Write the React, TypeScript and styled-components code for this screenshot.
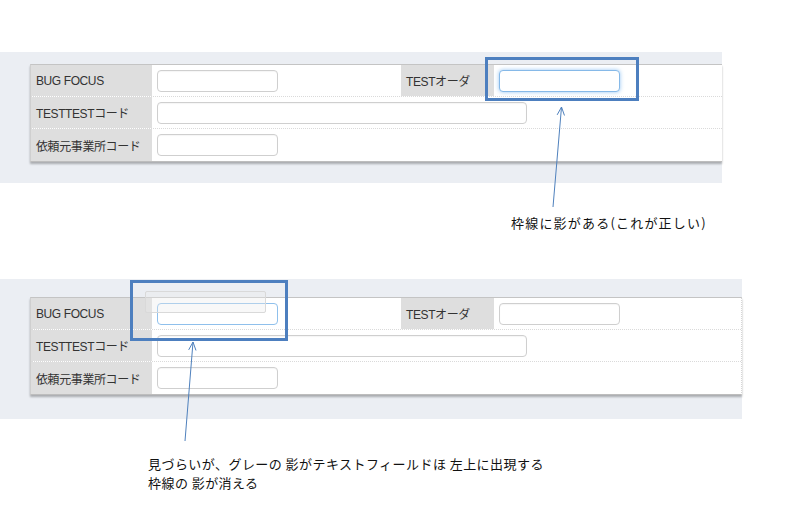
import React from "react";
import styled, { createGlobalStyle } from "styled-components";

const Global = createGlobalStyle`
  html, body { margin: 0; padding: 0; background: #ffffff; }
  body { font-family: "Liberation Sans", "Noto Sans CJK JP", sans-serif; }
`;

const Page = styled.div`
  position: relative;
  width: 799px;
  height: 526px;
  padding-top: 52px;
  box-sizing: border-box;
  overflow: hidden;
`;

const Panel = styled.div<{ $w: number; $h: number; $pt: number; $mt: number }>`
  position: relative;
  width: ${(p) => p.$w}px;
  height: ${(p) => p.$h}px;
  margin-top: ${(p) => p.$mt}px;
  padding: ${(p) => p.$pt}px 0 0 30px;
  box-sizing: border-box;
  background: #ebeef3;
`;

const Form = styled.div<{ $dottedRight?: boolean }>`
  background: #ffffff;
  border-top: 1px solid #c4c4c4;
  border-left: 1px solid #cfcfcf;
  border-right: ${(p) => (p.$dottedRight ? "1px dotted #d6d6d6" : "none")};
  box-shadow: 0 2px 2px rgba(0, 0, 0, 0.28);
  border-bottom: 1px solid #bdbdbd;
`;

const Row = styled.div<{ $last?: boolean }>`
  display: flex;
  height: 32px;
  box-sizing: border-box;
  border-bottom: ${(p) => (p.$last ? "none" : "1px dotted #dadada")};
`;

const Label = styled.div<{ $w: number }>`
  width: ${(p) => p.$w}px;
  flex: none;
  background: #dedede;
  color: #333333;
  font-size: 12px;
  letter-spacing: -0.4px;
  display: flex;
  align-items: center;
  padding-left: 5px;
  box-sizing: border-box;
`;

const Cell = styled.div<{ $w?: number }>`
  ${(p) => (p.$w ? `width: ${p.$w}px; flex: none;` : "flex: 1;")}
  display: flex;
  align-items: center;
  padding-left: 5px;
  box-sizing: border-box;
`;

const Input = styled.div<{ $w: number; $focus?: "glow" | "flat" }>`
  position: relative;
  width: ${(p) => p.$w}px;
  height: 22px;
  box-sizing: border-box;
  background: #ffffff;
  border-radius: 4px;
  border: 1px solid
    ${(p) =>
      p.$focus === "glow" ? "#86b9e8" : p.$focus === "flat" ? "#8fc0ec" : "#cfcfcf"};
  box-shadow: ${(p) =>
    p.$focus === "glow"
      ? "0 0 4px rgba(82, 160, 236, 0.6)"
      : p.$focus === "flat"
      ? "none"
      : "inset 0 1px 1px rgba(0,0,0,0.04)"};
`;

const GhostShadow = styled.div`
  position: absolute;
  left: -13px;
  top: -13px;
  width: 121px;
  height: 22px;
  box-sizing: border-box;
  border: 1px solid #d9d9d9;
  background: rgba(235, 235, 235, 0.35);
  border-radius: 2px;
  pointer-events: none;
`;

const Marker = styled.div<{ $l: number; $t: number; $w: number; $h: number }>`
  position: absolute;
  left: ${(p) => p.$l}px;
  top: ${(p) => p.$t}px;
  width: ${(p) => p.$w}px;
  height: ${(p) => p.$h}px;
  box-sizing: border-box;
  border: 3px solid #4d7fbf;
  pointer-events: none;
  z-index: 3;
`;

const Caption = styled.div<{ $mt: number; $pl: number; $ls: number }>`
  margin-top: ${(p) => p.$mt}px;
  padding-left: ${(p) => p.$pl}px;
  font-family: "Noto Sans CJK JP", sans-serif;
  font-size: 13px;
  line-height: 19px;
  color: #111111;
  letter-spacing: ${(p) => p.$ls}px;
`;

const Overlay = styled.svg`
  position: absolute;
  left: 0;
  top: 0;
  pointer-events: none;
  z-index: 4;
`;

type FormProps = { variant: "correct" | "wrong"; dottedRight?: boolean };

function FormTable({ variant, dottedRight }: FormProps) {
  return (
    <Form $dottedRight={dottedRight}>
      <Row>
        <Label $w={121}>BUG FOCUS</Label>
        <Cell $w={249}>
          <Input $w={121} $focus={variant === "wrong" ? "flat" : undefined}>
            {variant === "wrong" && <GhostShadow />}
          </Input>
        </Cell>
        <Label $w={93}>TESTオーダ</Label>
        <Cell>
          <Input $w={121} $focus={variant === "correct" ? "glow" : undefined} />
        </Cell>
      </Row>
      <Row>
        <Label $w={121}>TESTTESTコード</Label>
        <Cell>
          <Input $w={370} />
        </Cell>
      </Row>
      <Row $last>
        <Label $w={121}>依頼元事業所コード</Label>
        <Cell>
          <Input $w={121} />
        </Cell>
      </Row>
    </Form>
  );
}

function Arrow({ x1, y1, x2, y2 }: { x1: number; y1: number; x2: number; y2: number }) {
  const ang = Math.atan2(y2 - y1, x2 - x1);
  const len = 9;
  const spread = 0.42;
  const a1x = x2 - len * Math.cos(ang - spread);
  const a1y = y2 - len * Math.sin(ang - spread);
  const a2x = x2 - len * Math.cos(ang + spread);
  const a2y = y2 - len * Math.sin(ang + spread);
  return (
    <g stroke="#4f81bd" strokeWidth={1} fill="none">
      <line x1={x1} y1={y1} x2={x2} y2={y2} />
      <polyline points={`${a1x},${a1y} ${x2},${y2} ${a2x},${a2y}`} />
    </g>
  );
}

export default function App() {
  return (
    <>
      <Global />
      <Page>
        <Panel $w={722} $h={131} $pt={12} $mt={0}>
          <FormTable variant="correct" />
          <Marker $l={485} $t={5} $w={154} $h={44} />
        </Panel>
        <Caption $mt={30} $pl={511} $ls={1.2}>枠線に影がある(これが正しい)</Caption>
        <Panel $w={742} $h={140} $pt={18} $mt={47}>
          <FormTable variant="wrong" dottedRight />
          <Marker $l={130} $t={1} $w={158} $h={61} />
        </Panel>
        <Caption $mt={35} $pl={148} $ls={0.45}>
          見づらいが、グレーの 影がテキストフィールドほ 左上に出現する
          <br />
          枠線の 影が消える
        </Caption>
        <Overlay width={799} height={526} viewBox="0 0 799 526">
          <Arrow x1={553} y1={207} x2={561.5} y2={107} />
          <Arrow x1={185} y1={441} x2={193} y2={342} />
        </Overlay>
      </Page>
    </>
  );
}
